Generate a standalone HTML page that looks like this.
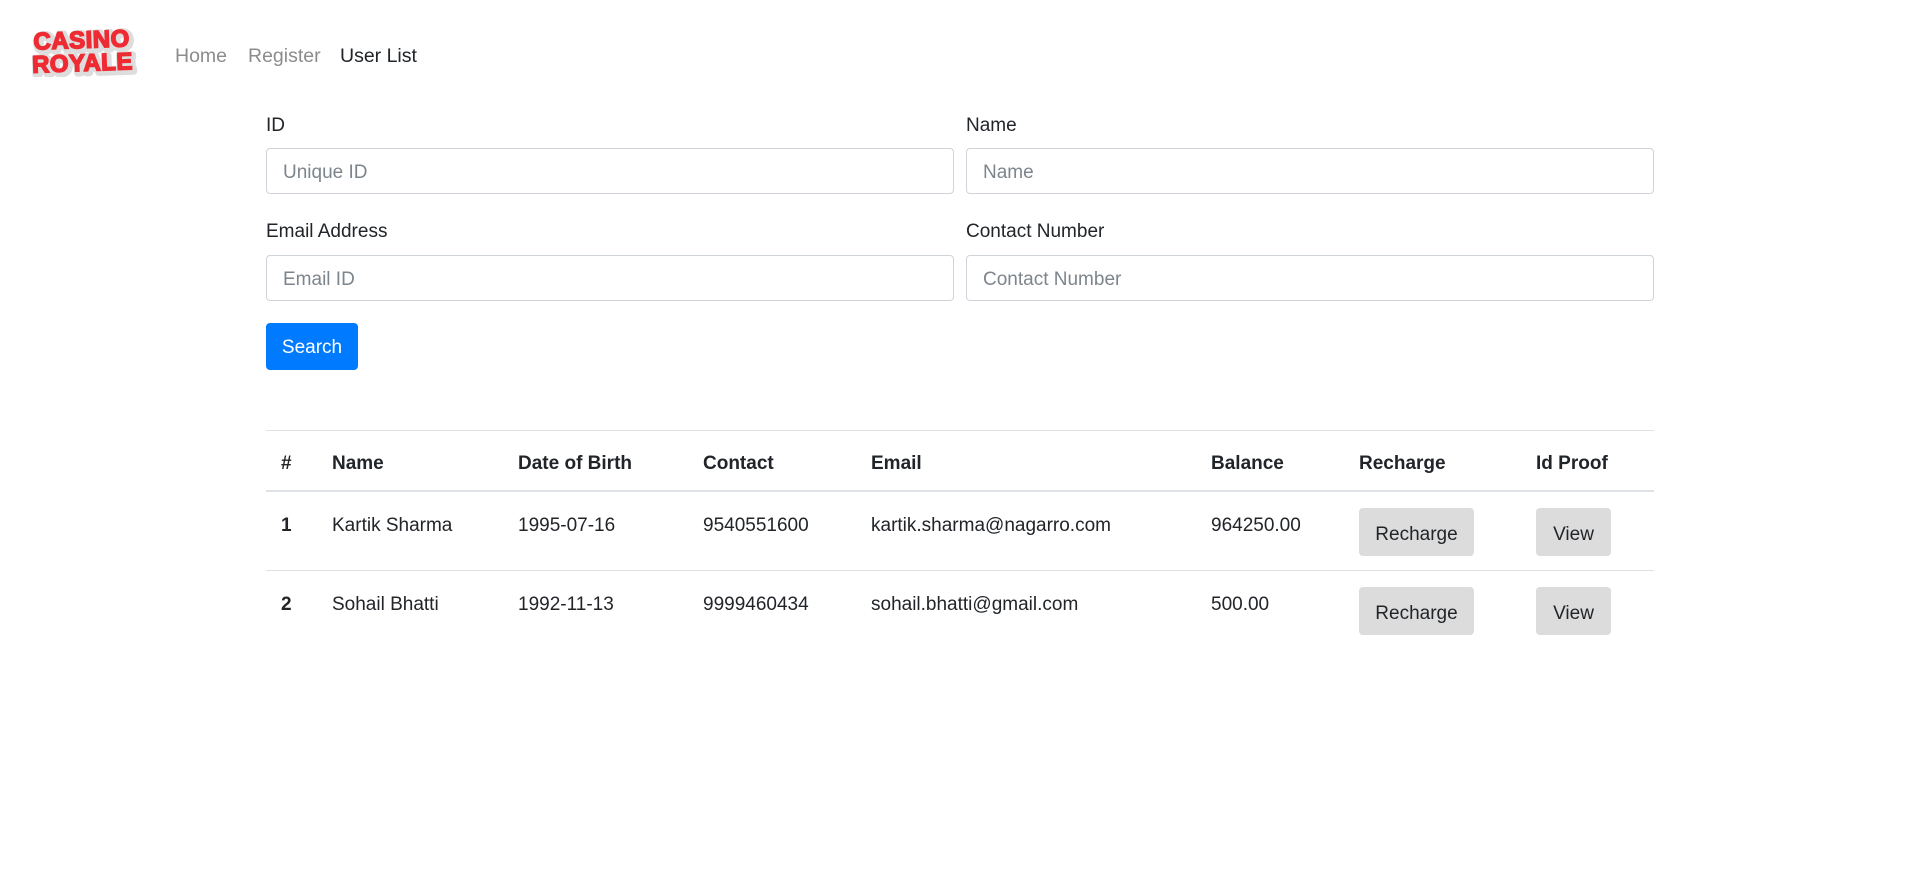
<!DOCTYPE html>
<html><head><meta charset="utf-8"><style>
body{margin:0;width:1920px;height:887px;background:#fff;font-family:"Liberation Sans",sans-serif;color:#212529;position:relative;overflow:hidden}
.a{position:absolute;white-space:nowrap}
.nav{top:45px;font-size:19.5px}
.lbl{font-size:19px}
.inp{position:absolute;height:46px;border:1px solid #ced4da;border-radius:4px;box-sizing:border-box;font-size:19px;color:#7d858c;padding-left:16px;line-height:48px}
.hl{position:absolute;left:266px;width:1388px;background:#dee2e6}
.th{font-weight:bold;font-size:19px;top:453px}
.td{font-size:19px}
.btn{position:absolute;background:#dcdcdc;border-radius:4px;font-size:19px;text-align:center;line-height:54px;height:48px;color:#212529}
</style></head><body>
<svg class="a" style="left:22px;top:25px" width="122" height="52" viewBox="0 0 122 52">
<g transform="rotate(-2 60 26)" font-family="Liberation Sans,sans-serif" font-weight="bold" font-size="24" text-anchor="middle" letter-spacing="0.5">
<text x="62" y="25" fill="#ddd" stroke="#ddd" stroke-width="7" stroke-linejoin="round">CASINO</text>
<text x="62" y="48" fill="#ddd" stroke="#ddd" stroke-width="7" stroke-linejoin="round">ROYALE</text>
<text x="60" y="23" fill="#ee2a33" stroke="#ee2a33" stroke-width="1.5">CASINO</text>
<text x="60" y="46" fill="#ee2a33" stroke="#ee2a33" stroke-width="1.5">ROYALE</text>
</g></svg>
<div class="a nav" style="left:175px;color:#8c8c8c">Home</div>
<div class="a nav" style="left:248px;color:#8c8c8c">Register</div>
<div class="a nav" style="left:340px;color:#212529">User List</div>

<div class="a lbl" style="left:266px;top:115px">ID</div>
<div class="a lbl" style="left:966px;top:115px">Name</div>
<div class="inp" style="left:266px;top:148px;width:688px">Unique ID</div>
<div class="inp" style="left:966px;top:148px;width:688px">Name</div>
<div class="a lbl" style="left:266px;top:221px">Email Address</div>
<div class="a lbl" style="left:966px;top:221px">Contact Number</div>
<div class="inp" style="left:266px;top:255px;width:688px">Email ID</div>
<div class="inp" style="left:966px;top:255px;width:688px">Contact Number</div>
<div class="a" style="left:266px;top:323px;width:92px;height:47px;background:#007bff;border-radius:4px;color:#fff;font-size:19px;text-align:center;line-height:50px">Search</div>

<div class="hl" style="top:430px;height:1px"></div>
<div class="hl" style="top:490px;height:2px"></div>
<div class="hl" style="top:570px;height:1px"></div>
<div class="a th" style="left:281px">#</div>
<div class="a th" style="left:332px">Name</div>
<div class="a th" style="left:518px">Date of Birth</div>
<div class="a th" style="left:703px">Contact</div>
<div class="a th" style="left:871px">Email</div>
<div class="a th" style="left:1211px">Balance</div>
<div class="a th" style="left:1359px">Recharge</div>
<div class="a th" style="left:1536px">Id Proof</div>

<div class="a td" style="left:281px;top:515px;font-weight:bold">1</div>
<div class="a td" style="left:332px;top:515px">Kartik Sharma</div>
<div class="a td" style="left:518px;top:515px">1995-07-16</div>
<div class="a td" style="left:703px;top:515px">9540551600</div>
<div class="a td" style="left:871px;top:515px">kartik.sharma@nagarro.com</div>
<div class="a td" style="left:1211px;top:515px">964250.00</div>
<div class="btn" style="left:1359px;top:508px;width:115px">Recharge</div>
<div class="btn" style="left:1536px;top:508px;width:75px">View</div>

<div class="a td" style="left:281px;top:594px;font-weight:bold">2</div>
<div class="a td" style="left:332px;top:594px">Sohail Bhatti</div>
<div class="a td" style="left:518px;top:594px">1992-11-13</div>
<div class="a td" style="left:703px;top:594px">9999460434</div>
<div class="a td" style="left:871px;top:594px">sohail.bhatti@gmail.com</div>
<div class="a td" style="left:1211px;top:594px">500.00</div>
<div class="btn" style="left:1359px;top:587px;width:115px">Recharge</div>
<div class="btn" style="left:1536px;top:587px;width:75px">View</div>
</body></html>
